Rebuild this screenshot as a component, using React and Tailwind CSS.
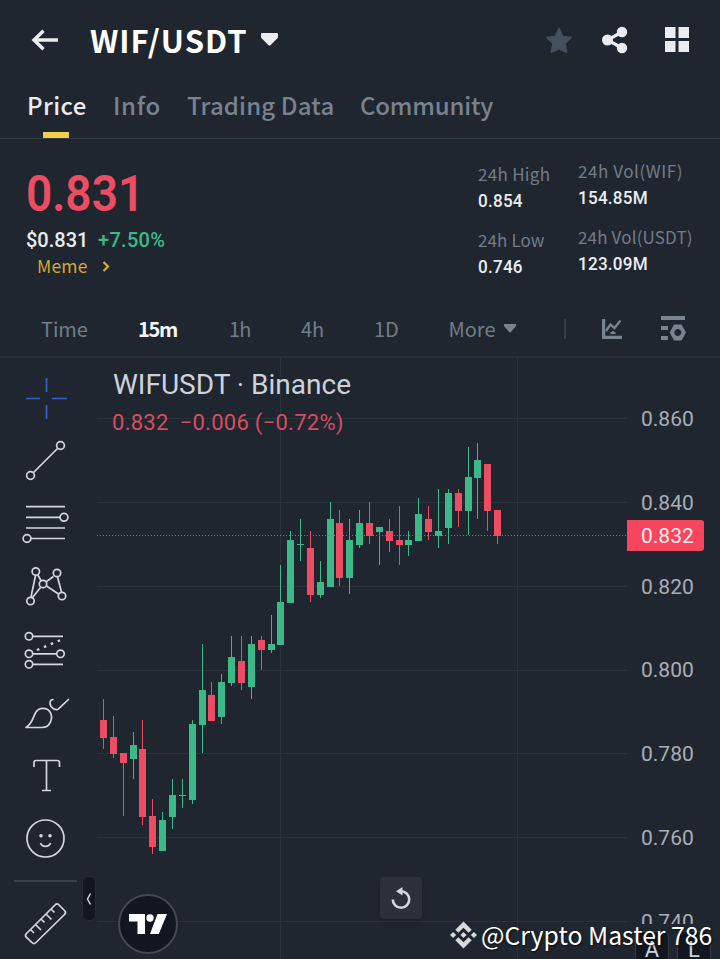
import { useState } from "react";

const UP = "#3cb989";
const DOWN = "#ec4d62";

// [x, wick top, body top, body bottom, wick bottom, up?]
const candles = [
  [103.5, 699, 720, 738, 749, 0],
  [113.5, 716, 737, 754, 758, 0],
  [123.5, 753, 753, 763, 816, 0],
  [133.5, 732, 745, 759, 779, 1],
  [142.5, 720, 749, 817, 825, 0],
  [152.5, 799, 816, 847, 854, 0],
  [162.5, 812, 820, 851, 851, 1],
  [172.5, 779, 795, 817, 829, 1],
  [182.5, 779, 795, 796, 808, 1],
  [192.5, 720, 724, 800, 804, 1],
  [202.5, 644, 690, 725, 753, 1],
  [211.5, 682, 695, 721, 721, 0],
  [221.5, 674, 682, 717, 724, 1],
  [231.5, 636, 657, 683, 686, 1],
  [241.5, 636, 661, 683, 690, 0],
  [251.5, 636, 644, 687, 699, 1],
  [261.5, 636, 640, 650, 670, 0],
  [271.5, 615, 644, 650, 653, 1],
  [280.5, 565, 602, 645, 645, 1],
  [290.5, 531, 540, 603, 603, 1],
  [300.5, 519, 544, 545, 561, 1],
  [310.5, 531, 548, 595, 602, 0],
  [320.5, 561, 582, 595, 598, 1],
  [330.5, 502, 519, 587, 587, 1],
  [339.5, 510, 523, 578, 586, 0],
  [349.5, 519, 540, 578, 594, 1],
  [359.5, 510, 523, 545, 548, 1],
  [369.5, 502, 523, 536, 544, 0],
  [379.5, 527, 527, 532, 565, 1],
  [389.5, 519, 531, 541, 552, 0],
  [399.5, 506, 540, 545, 565, 0],
  [408.5, 531, 540, 545, 556, 1],
  [418.5, 498, 514, 541, 541, 1],
  [428.5, 506, 519, 532, 540, 0],
  [438.5, 489, 531, 536, 548, 1],
  [448.5, 489, 493, 528, 544, 1],
  [458.5, 489, 493, 511, 527, 0],
  [468.5, 447, 477, 511, 535, 1],
  [477.5, 443, 460, 478, 519, 1],
  [487.5, 464, 464, 511, 531, 0],
  [497.5, 510, 510, 536, 544, 0],
];

const gridRows = [418.5, 502.5, 586.5, 670.5, 753.5, 837.5, 921.5];
const gridCols = [280.5, 517.5];
const prices = ["0.860", "0.840", "0.820", "0.800", "0.780", "0.760"];

const tabs = [
  { name: "Price", cls: "w-[59px] tracking-[0.4px]" },
  { name: "Info", cls: "w-[47px] tracking-[0.7px]" },
  { name: "Trading Data", cls: "w-[146px] tracking-[0.15px]" },
  { name: "Community", cls: "w-[133px] tracking-[-0.2px]" },
];

const intervals = [
  { name: "Time", cls: "w-[97px] tracking-[-0.1px]" },
  { name: "15m", cls: "w-[91px] tracking-[-1.3px]" },
  { name: "1h", cls: "w-[72px] tracking-[-0.8px]" },
  { name: "4h", cls: "w-[73px]" },
  { name: "1D", cls: "w-[74px]" },
];

function Header() {
  return (
    <header className="flex h-[79px] items-center px-[31px]">
      <svg className="mr-[31px] h-[22px] w-[28px]" viewBox="0 0 28 22" fill="none" stroke="#eaecef" strokeWidth="3.4">
        <path d="M27 11H3M12.5 1.8 3 11l9.500 9.200" />
      </svg>
      <h1 className="w-[171px] whitespace-nowrap text-[31px] leading-10 font-semibold tracking-[1px] text-white">WIF/USDT</h1>
      <svg className="h-3.5 w-[17px]" viewBox="0 0 17 14" fill="#eaecef">
        <path d="M1 0h15q1 0 1 1v3q0 .8-.6 1.300L9.500 12.200q-1 .8-2 0L.6 5.300Q0 4.800 0 4V1q0-1 1-1Z" />
      </svg>
      <div className="-mr-px ml-auto flex items-center">
        <svg className="mr-[29px] h-[28px] w-[28px]" viewBox="0 0 28 28" fill="#444f5f" stroke="#444f5f" strokeWidth="1.500" strokeLinejoin="round">
          <path d="m14 2.500 3.700 8 8.600 1-6.300 5.900 1.700 8.900L14 22.800l-7.700 3.500L8 17.400l-6.300-5.900 8.600-1Z" />
        </svg>
        <svg className="mr-[36px] h-[28px] w-[27px]" viewBox="0 0 27 28" fill="#eaecef">
          <path d="M20 6 5.500 14 20 22" fill="none" stroke="#eaecef" strokeWidth="3.200" />
          <circle cx="20" cy="6" r="5.200" />
          <circle cx="5.500" cy="14" r="5.500" />
          <circle cx="20" cy="22" r="5.200" />
        </svg>
        <svg className="h-[25px] w-[25px]" viewBox="0 0 25 25" fill="#eaecef">
          <path d="M0 0h10.500v11H0zM13.500 0H24v11H13.500zM0 14h10.500v11H0zM13.500 14H24v11H13.500z" />
        </svg>
      </div>
    </header>
  );
}

function Stat({ label, value, cls }) {
  return (
    <div className="h-[66px] whitespace-nowrap">
      <div className={`h-[27px] text-[17px] leading-[26px] text-[#737c89] ${cls}`}>{label}</div>
      <div className="origin-left scale-x-[0.95] font-[Roboto] text-[18px] leading-[26px] font-medium tracking-[0.25px] text-[#eaecef]">{value}</div>
    </div>
  );
}

function Summary() {
  return (
    <section className="flex h-[161px] pl-[27px]">
      <div className="w-[451px] pt-[27px]">
        <div className="-ml-px w-[130px] origin-left scale-x-[0.92] font-[Roboto] text-[50px] leading-[56px] font-semibold text-[#ec4d62]">0.831</div>
        <div className="mt-[5px] -ml-px flex h-[26px] items-center font-[Roboto] text-[20px] font-medium">
          <span className="w-[72px] text-[#eaecef]">$0.831</span>
          <span className="tracking-[0.3px] text-[#3cb989]">+7.50%</span>
        </div>
        <div className="flex h-[26px] items-center pl-[10px] text-[17.500px] tracking-[0.2px] text-[#d6a92f]">
          <span className="w-[65px]">Meme</span>
          <svg className="h-[11px] w-2" viewBox="0 0 8 11" fill="none" stroke="#d6a92f" strokeWidth="2.200">
            <path d="m1.500 1 4.500 4.500L1.500 10" />
          </svg>
        </div>
      </div>
      <div className="w-[100px] pt-[22px]">
        <Stat label="24h High" value="0.854" cls="tracking-[0.3px]" />
        <Stat label="24h Low" value="0.746" cls="tracking-[0.1px]" />
      </div>
      <div className="pt-[19px]">
        <Stat label="24h Vol(WIF)" value="154.85M" cls="tracking-[0.55px]" />
        <Stat label="24h Vol(USDT)" value="123.09M" cls="tracking-[0.15px]" />
      </div>
    </section>
  );
}

function Intervals({ active, onChange }) {
  return (
    <div className="flex h-[58px] items-center border-b-2 border-[#272e38] pt-px pl-[41px] text-[20px] text-[#737c89]">
      {intervals.map((item) => (
        <button
          key={item.name}
          onClick={() => onChange(item.name)}
          className={`text-left ${item.cls} ${item.name === active ? "font-semibold text-[#f5f6f8]" : ""}`}
        >
          {item.name}
        </button>
      ))}
      <button className="flex w-[116px] items-center gap-2">
        <span className="w-[48px]">More</span>
        <svg className="h-[9px] w-3" viewBox="0 0 12 9" fill="#79828f">
          <path d="M.5 0h11q.5 0 .5.500V2L6.700 8.200q-.7.700-1.400 0L0 2V.5Q0 0 .5 0Z" />
        </svg>
      </button>
      <span className="h-5 border-l-2 border-[#343c48]" />
      <svg className="ml-[36px] h-5 w-5" viewBox="0 0 20 20" fill="none" stroke="#79828f">
        <path d="M1.600 0v18.300H20" strokeWidth="3.200" />
        <path d="m4 12 4.500-6.500 4 3.500 6-7.500" strokeWidth="2.400" />
        <path d="M11 12v2.500M8.500 14h5" strokeWidth="1.800" />
      </svg>
      <svg className="ml-[39px] h-[25px] w-[25px]" viewBox="0 0 25 25" fill="#79828f">
        <path d="M0 0h24v4H0zM0 10h7v4H0zM0 20h7v4H0z" />
        <path fillRule="evenodd" d="M13 8.500h7.500l4.500 8-4.500 8H13l-4.300-8ZM16.800 13a3.500 3.500 0 1 0 .01 0Z" />
      </svg>
    </div>
  );
}

function Toolbar() {
  return (
    <aside className="relative w-[97px] shrink-0">
      <svg className="h-[601px] w-[97px]" viewBox="0 358 97 601" fill="none" stroke="#d3d7de" strokeWidth="1.700">
        {/* crosshair */}
        <path d="M46.500 378v14M46.500 405v14M26 398.500h14M52 398.500h15" stroke="#3a5fc4" />
        {/* trend line */}
        <path d="m33.500 472.500 24-24" />
        <circle cx="30.500" cy="475.500" r="3.900" />
        <circle cx="60.500" cy="445.500" r="3.900" />
        {/* fib levels */}
        <path d="M26 506.700h39M26 517.300h34M26 528h39M31 538.500h34" />
        <circle cx="64" cy="517.300" r="3.900" />
        <circle cx="27" cy="538.500" r="3.900" />
        {/* pattern */}
        <path d="m35.500 575.500-4.500 21.500M37.800 575l3.200 5.500M32.500 597.500l8-10M46.500 581.500l7-5M46.500 586l12 8M57.500 577l4 15" />
        <circle cx="35.800" cy="571.500" r="3.700" />
        <circle cx="30.500" cy="601" r="3.700" />
        <circle cx="43" cy="584" r="3.700" />
        <circle cx="57" cy="573" r="3.700" />
        <circle cx="62" cy="596" r="3.700" />
        {/* forecast */}
        <path d="M33 636.300h30M33 653.800h23M33 664.300h30" />
        <path d="m37 650 26-11" strokeWidth="2.400" strokeDasharray="2.500 5" />
        <circle cx="29" cy="636.300" r="3.700" />
        <circle cx="29" cy="653.800" r="3.700" />
        <circle cx="60.500" cy="653.800" r="3.700" />
        <circle cx="29" cy="664.300" r="3.700" />
        {/* brush */}
        <path d="M26 727.500c7-4.500 7-11 10-15.500 3.500-5 11-4.500 14 0 3.500 5.500.5 15.500-8 15.500ZM69 699 58.500 708.800c-3 2.500-8.500-1.500-8.500-5.800 0-2 1.500-3.500 3.500-3.500" strokeLinejoin="round" />
        {/* text */}
        <path d="M34 767v-4.500q0-2 2-2h21q2.500 0 2.500 2v4.500M46.500 760.500v30M42 790.500h9" />
        {/* emoji */}
        <circle cx="45.500" cy="838.500" r="18.500" />
        <path d="M40.500 843c1.500 4.500 8.500 4.500 10 0" />
        <circle cx="41" cy="835.800" r="1.800" fill="#d3d7de" stroke="none" />
        <circle cx="50" cy="835.800" r="1.800" fill="#d3d7de" stroke="none" />
        <path d="M14 881h63" stroke="#424a56" />
        {/* ruler */}
        <path d="M26.500 933.500 55 905q2-2 4 0l5.500 5.500q2 2 0 4L36 942.500q-2 2-4 0l-5.500-5q-2-2 0-4ZM30.500 929.500l3.500 3.500M35.500 924.500l5.500 5.500M41 919l3.500 3.500M46 914l5.500 5.500M51 909l3.500 3.500" />
      </svg>
      <button className="absolute top-[518px] left-[82px] flex h-[45px] w-[14px] items-center justify-center rounded-md border border-[#272c37] bg-[#121620]">
        <svg className="h-3 w-1.500" viewBox="0 0 6 12" fill="none" stroke="#d3d7de" strokeWidth="1.500">
          <path d="M4.500.5 1.500 6l3 5.500" />
        </svg>
      </button>
    </aside>
  );
}

function Candles() {
  return (
    <svg className="h-[601px] w-[530px]" viewBox="97 358 530 601" shapeRendering="crispEdges">
      {gridRows.map((y) => (
        <path key={y} d={`M97 ${y}H627`} stroke="#2a323b" />
      ))}
      {gridCols.map((x) => (
        <path key={x} d={`M${x} 358V959`} stroke="#2a323b" />
      ))}
      {candles.map(([x, high, top, bottom, low, up]) => (
        <g key={x} fill={up ? UP : DOWN}>
          <rect x={x - 0.5} y={high} width="1" height={low - high} />
          <rect x={x - 3.5} y={top} width="7" height={bottom - top} />
        </g>
      ))}
      <path d="M97 535.5H627" stroke="#d9506a" strokeDasharray="1 2" />
    </svg>
  );
}

function Chart() {
  return (
    <main className="relative flex h-[601px] overflow-hidden font-[Roboto]">
      <Toolbar />
      <Candles />
      <div className="w-[93px] pt-[19px] pl-[14px] text-[21px] text-[#a9aeb6]">
        {prices.map((p) => (
          <div key={p} className="h-[83.800px] leading-[84px]">
            {p}
          </div>
        ))}
        <div className="h-[44px] overflow-hidden leading-[84px]">0.740</div>
      </div>

      <div className="absolute top-[10px] left-[113px] text-[#ced2d9]">
        <div className="text-[28px] leading-[34px]">WIFUSDT · Binance</div>
        <div className="mt-[8px] -ml-px text-[22px] leading-[26px] tracking-[0.27px] text-[#d84d60]">
          <span className="mr-[11px]">0.832</span>
          <span>−0.006 (−0.72%)</span>
        </div>
      </div>

      <div className="absolute top-[162px] left-[627px] h-[31px] w-[77px] rounded-r-[3px] bg-[#f6465d] pt-px pl-[14px] text-[21px] leading-[31px] text-[#fdeef0]">0.832</div>

      {/* TradingView badge */}
      <div className="absolute top-[536px] left-[118px] flex h-[60px] w-[60px] items-center justify-center rounded-full border-2 border-[#444852] bg-[#121620]">
        <svg className="h-5 w-[38px]" viewBox="0 0 38 20" fill="#fff">
          <path d="M0 0h16v20H8.500V7.500H0zM28.500 0H38l-8.200 20H21z" />
          <circle cx="21" cy="4" r="3.700" />
        </svg>
      </div>

      <button className="absolute top-[519px] left-[380px] flex h-[42px] w-[42px] items-center justify-center rounded-[4px] bg-[#2b303b] shadow-md">
        <svg className="h-[22px] w-5" viewBox="0 0 20 22" fill="none" stroke="#d3d7de" strokeWidth="2.600">
          <path d="M1.800 12.500a8.200 8.200 0 1 0 8.200-8.200" />
          <path d="M11.500 0v8.500L5 4.300Z" fill="#d3d7de" stroke="none" />
        </svg>
      </button>

      <div className="absolute top-[573px] left-[635px] flex gap-2 text-[22px] leading-[36px] text-[#ced2d9]">
        <span className="h-10 w-[34px] rounded-md border border-[#343a46] bg-[#121620] text-center">A</span>
        <span className="h-10 w-[34px] rounded-md border border-[#343a46] bg-[#121620] text-center">L</span>
      </div>

      {/* watermark */}
      <div className="absolute top-[561px] left-[450px] flex items-center font-['Noto_Sans_CJK_SC',sans-serif] text-[24.800px] leading-[34px] whitespace-nowrap text-white [text-shadow:1px_1px_2px_#000a]">
        <svg className="mr-1 h-7 w-[27px]" viewBox="0 0 28 28" fill="#d9dadb">
          <path d="m14 0 8.500 8.500-3.200 3.200L14 6.400l-5.300 5.300-3.200-3.200ZM14 28l8.500-8.500-3.200-3.200-5.300 5.300-5.300-5.300-3.200 3.200ZM14 10.800l3.200 3.200-3.200 3.200-3.200-3.200ZM3.200 10.800 6.400 14l-3.200 3.200L0 14ZM24.800 10.800 28 14l-3.200 3.200-3.200-3.200Z" />
        </svg>
        <span className="-mt-0.5">@Crypto Master 786</span>
      </div>
    </main>
  );
}

export default function App() {
  const [tab, setTab] = useState("Price");
  const [interval, setInterval] = useState("15m");

  return (
    <div className="h-[959px] w-[720px] overflow-hidden bg-[#1f262f] font-['Noto_Sans_CJK_SC',sans-serif]">
      <Header />
      <nav className="flex h-[60px] gap-[27px] border-b border-[#333a44] pl-[27px]">
        {tabs.map((t) => (
          <button
            key={t.name}
            onClick={() => setTab(t.name)}
            className={`flex flex-col text-[24px] font-medium whitespace-nowrap ${t.cls} ${t.name === tab ? "text-[#eaecef]" : "text-[#79828f]"}`}
          >
            <span className="h-[53px] leading-[52px]">{t.name}</span>
            {t.name === tab && <span className="ml-4 h-[6px] w-[26px] bg-[#f0d04b]" />}
          </button>
        ))}
      </nav>
      <Summary />
      <Intervals active={interval} onChange={setInterval} />
      <Chart />
    </div>
  );
}
